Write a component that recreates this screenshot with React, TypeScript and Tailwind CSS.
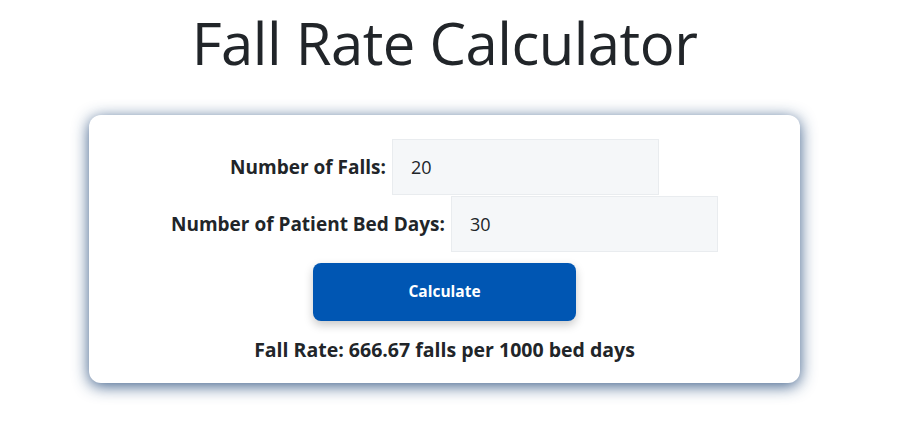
export default function App() {
  return (
    <div className="min-h-screen bg-white flex flex-col items-center pr-[12px] font-['Open_Sans',sans-serif] text-[#212529]">
      <h1 className="text-[58px] leading-none font-normal mt-[14px] tracking-[-0.5px]">
        Fall Rate Calculator
      </h1>

      <div className="mt-[43px] w-[711px] h-[268px] bg-white rounded-[12px] shadow-[0_3px_16px_rgba(25,65,115,0.85)] flex flex-col items-center pt-[24px]">
        <div className="flex items-center">
          <label className="text-[19px] font-bold mr-[6px]">Number of Falls:</label>
          <input
            type="text"
            defaultValue="20"
            className="w-[267px] h-[56px] bg-[#f5f7f9] border border-[#e9ecef] px-[18px] text-[18px] outline-none"
          />
        </div>
        <div className="flex items-center mt-[1px]">
          <label className="text-[19px] font-bold mr-[6px]">Number of Patient Bed Days:</label>
          <input
            type="text"
            defaultValue="30"
            className="w-[267px] h-[56px] bg-[#f5f7f9] border border-[#e9ecef] px-[18px] text-[18px] outline-none"
          />
        </div>
        <button className="mt-[11px] w-[263px] h-[58px] rounded-[8px] bg-[#0056b3] text-white text-[15.5px] font-bold shadow-[0_4px_10px_rgba(0,0,0,0.22)]">
          Calculate
        </button>
        <p className="mt-[14px] text-[19.5px] font-bold">
          Fall Rate: 666.67 falls per 1000 bed days
        </p>
      </div>
    </div>
  );
}
